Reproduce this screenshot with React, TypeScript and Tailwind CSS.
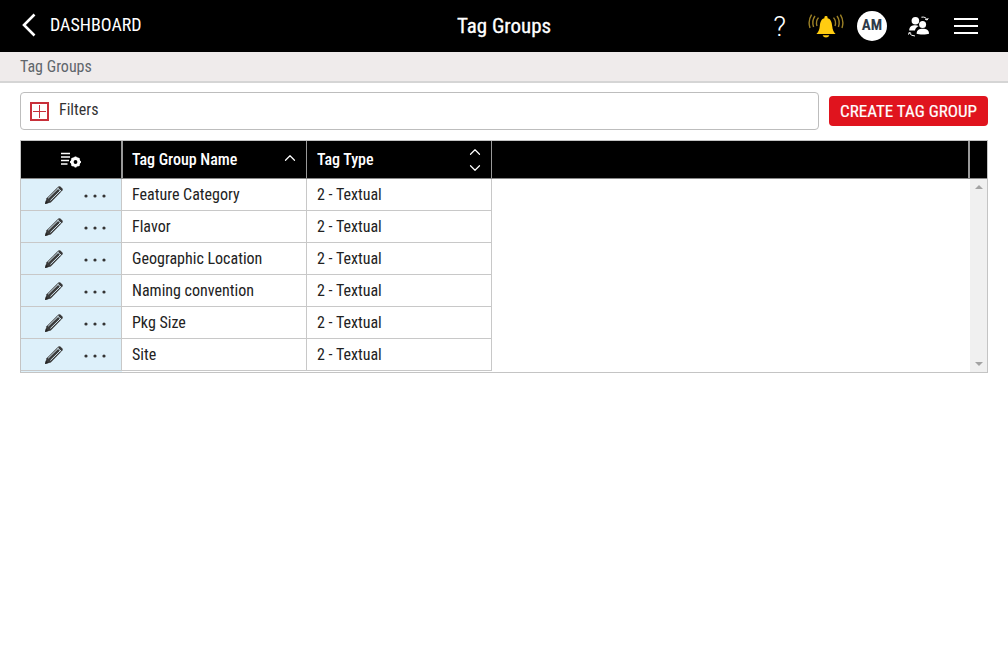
import React from "react";
import { ChevronUp, ChevronDown } from "lucide-react";

const rows = ["Feature Category", "Flavor", "Geographic Location", "Naming convention", "Pkg Size", "Site"];

const Pencil = () => (
  <svg width="20" height="20" viewBox="0 0 20 20" className="text-[#3a3a3a]">
    <path d="M1 19 L2.6 13.2 L14.4 1.6 Q15.4 .8 16.4 1.6 L18.4 3.6 Q19.2 4.6 18.4 5.6 L6.8 17.4 Z" fill="currentColor" />
    <path d="M4.2 13.2 L14.6 3 M6.4 15.4 L16.8 5.2 M13.4 2.8 L17.2 6.6" stroke="#ddf0fa" strokeWidth="1" fill="none" />
    <path d="M1 19 L1.9 15.6 L4.4 18.1 Z" fill="#222" />
  </svg>
);

const Dots = () => (
  <svg width="22" height="4" viewBox="0 0 22 4">
    <circle cx="2" cy="2" r="1.6" fill="#333" />
    <circle cx="11" cy="2" r="1.6" fill="#333" />
    <circle cx="20" cy="2" r="1.6" fill="#333" />
  </svg>
);

const ListGear = () => (
  <svg width="22" height="16" viewBox="0 0 22 16">
    <path d="M1 1.5H10M1 5H10M1 8.5H9M1 12H7.5" stroke="#fff" strokeWidth="1.6" />
    <circle cx="15.5" cy="10" r="3.4" fill="none" stroke="#fff" strokeWidth="3" />
    <path d="M15.5 4.6V6.6M15.5 13.4V15.4M10.1 10H12.1M18.9 10H20.9M11.7 6.2L13 7.5M18 12.5L19.3 13.8M19.3 6.2L18 7.5M13 12.5L11.7 13.8" stroke="#fff" strokeWidth="1.8" />
  </svg>
);

const Bell = () => (
  <svg width="36" height="26" viewBox="0 0 36 26">
    <path d="M18 4 C13 4 12.2 8.5 11.8 12 C11.4 16 10.4 18 8.4 20 H27.6 C25.6 18 24.6 16 24.2 12 C23.8 8.5 23 4 18 4Z" fill="#ffcc11" />
    <rect x="16.4" y="2" width="3.2" height="3.4" rx="1.4" fill="#ffcc11" />
    <path d="M14.6 21.2 H21.4 Q20.6 23.6 18 23.6 Q15.4 23.6 14.6 21.2Z" fill="#ffcc11" />
    <g stroke="#9c8126" strokeWidth="1.4" fill="none">
      <path d="M10.5 3.6 Q7.4 7 9 12" />
      <path d="M7 2 Q3.4 7 5.6 13" />
      <path d="M3.6 .6 Q-.4 7 2 14" />
      <path d="M25.5 3.6 Q28.6 7 27 12" />
      <path d="M29 2 Q32.6 7 30.4 13" />
      <path d="M32.4 .6 Q36.4 7 34 14" />
    </g>
  </svg>
);

const Users = () => (
  <svg width="22" height="22" viewBox="0 0 22 22">
    <circle cx="7.4" cy="5.8" r="3.8" fill="#fff" />
    <path d="M1.2 15.6 C1.2 11.4 4 10.2 7.4 10.2 C8.8 10.2 9.8 10.5 10.6 11 C8.4 12.2 7.2 13.6 7 15.6 Z" fill="#fff" />
    <circle cx="14.6" cy="9.6" r="3.5" fill="#fff" />
    <path d="M8.6 18.8 C8.6 15 11.4 13.8 14.8 13.8 C18.2 13.8 21 15 21 18.8 C19 19.8 10.6 19.8 8.6 18.8 Z" fill="#fff" />
    <path d="M13.4 2.2 Q17.6 1.4 19.2 5 M19.2 5 L20.2 3 M19.2 5 L17.2 4.4" stroke="#fff" strokeWidth="1" fill="none" />
    <path d="M7 21 Q2.6 21 1.2 17.6 M1.2 17.6 L.4 19.6 M1.2 17.6 L3.2 18.2" stroke="#fff" strokeWidth="1" fill="none" />
  </svg>
);

export default function App() {
  return (
    <div className="min-h-[648px] bg-white font-['Roboto',sans-serif] [font-stretch:75%] text-[16px] text-[#222]">
      <header className="flex h-[52px] items-center bg-black px-[22px] text-white">
        <div className="flex flex-1 items-center">
          <svg width="14" height="24" viewBox="0 0 14 24" fill="none" stroke="#fff" strokeWidth="2.6" className="-mt-[3px]">
            <path d="M12.5 1.5 L2 12 L12.5 22.5" />
          </svg>
          <span className="ml-[14px] -mt-[3px] text-[18px]">DASHBOARD</span>
        </div>
        <span className="mt-[2px] text-[21px] [-webkit-text-stroke:0.3px_white]">Tag Groups</span>
        <div className="flex flex-1 items-center justify-end">
          <span className="mt-[2px] text-[28px] font-light leading-none [font-stretch:100%]">?</span>
          <span className="ml-[22px] mt-[1px]"><Bell /></span>
          <span className="ml-[13px] -mt-[1px] flex h-[30px] w-[30px] items-center justify-center rounded-full bg-white text-[15px] font-bold text-[#2d3a48]">AM</span>
          <span className="ml-[21px] -mt-[1px]"><Users /></span>
          <span className="ml-[24px] mr-[8px] flex w-[24px] flex-col gap-[5px]">
            <i className="h-[2px] bg-white" /><i className="h-[2px] bg-white" /><i className="h-[2px] bg-white" />
          </span>
        </div>
      </header>
      <div className="flex h-[31px] items-center border-b-2 border-[#d5d5d5] bg-[#efebeb] pl-[20px] pt-[1px] text-[#5f666c]">Tag Groups</div>
      <div className="flex items-center gap-[10px] px-[20px] pt-[9px]">
        <div className="flex h-[38px] flex-1 items-center rounded-[4px] border border-[#bdbdbd] pl-[9px]">
          <span className="relative h-[19px] w-[19px] border-2 border-[#c8303a]">
            <i className="absolute left-[1px] right-[1px] top-[7px] h-[1px] bg-[#c8303a]" />
            <i className="absolute bottom-[1px] top-[1px] left-[7px] w-[1px] bg-[#c8303a]" />
          </span>
          <span className="ml-[10px] -mt-[3px] text-[#333]">Filters</span>
        </div>
        <button className="h-[30px] w-[159px] rounded-[4px] bg-[#e0141e] pt-[2px] text-[17px] text-white [-webkit-text-stroke:0.2px_white]">CREATE TAG GROUP</button>
      </div>
      <div className="mx-[20px] mt-[10px] h-[233px] overflow-hidden border border-[#c4c4c4]">
        <div className="flex h-[38px] border-b border-[#888] bg-black font-medium text-white">
          <div className="flex w-[100px] items-center justify-center"><ListGear /></div>
          <div className="flex w-[185px] items-center justify-between border-l-2 border-[#999] pl-[9px] pr-[7px]">
            Tag Group Name <ChevronUp size={18} strokeWidth={1.6} className="-mt-[3px]" />
          </div>
          <div className="flex w-[185px] items-center justify-between border-l border-[#999] pl-[10px] pr-[7px]">
            Tag Type
            <span className="flex flex-col">
              <ChevronUp size={18} strokeWidth={1.6} />
              <ChevronDown size={18} strokeWidth={1.6} className="-mt-[2px]" />
            </span>
          </div>
          <div className="flex-1 border-l border-[#999]" />
          <div className="w-[19px] border-l-2 border-[#999]" />
        </div>
        <div className="flex h-[193px]">
          <div className="w-[471px]">
            {rows.map((r) => (
              <div key={r} className="flex h-[32px] border-b border-[#c8c8c8]">
                <div className="flex w-[100px] items-center bg-[#ddf0fa] pl-[23px]">
                  <Pencil />
                  <span className="ml-[20px] mt-[2px]"><Dots /></span>
                </div>
                <div className="flex w-[185px] items-center border-l border-[#c8c8c8] pl-[10px]">{r}</div>
                <div className="flex w-[186px] items-center border-x border-[#c8c8c8] pl-[10px]">2 - Textual</div>
              </div>
            ))}
            <div className="h-[1px] w-[101px] bg-[#ddf0fa]" />
          </div>
          <div className="flex-1" />
          <div className="flex w-[17px] flex-col items-center justify-between bg-[#f0f0f0] py-[6px]">
            <i className="h-0 w-0 border-x-[4px] border-b-[4px] border-x-transparent border-b-[#a3a3a3]" />
            <i className="h-0 w-0 border-x-[4px] border-t-[4px] border-x-transparent border-t-[#a3a3a3]" />
          </div>
        </div>
      </div>
    </div>
  );
}
